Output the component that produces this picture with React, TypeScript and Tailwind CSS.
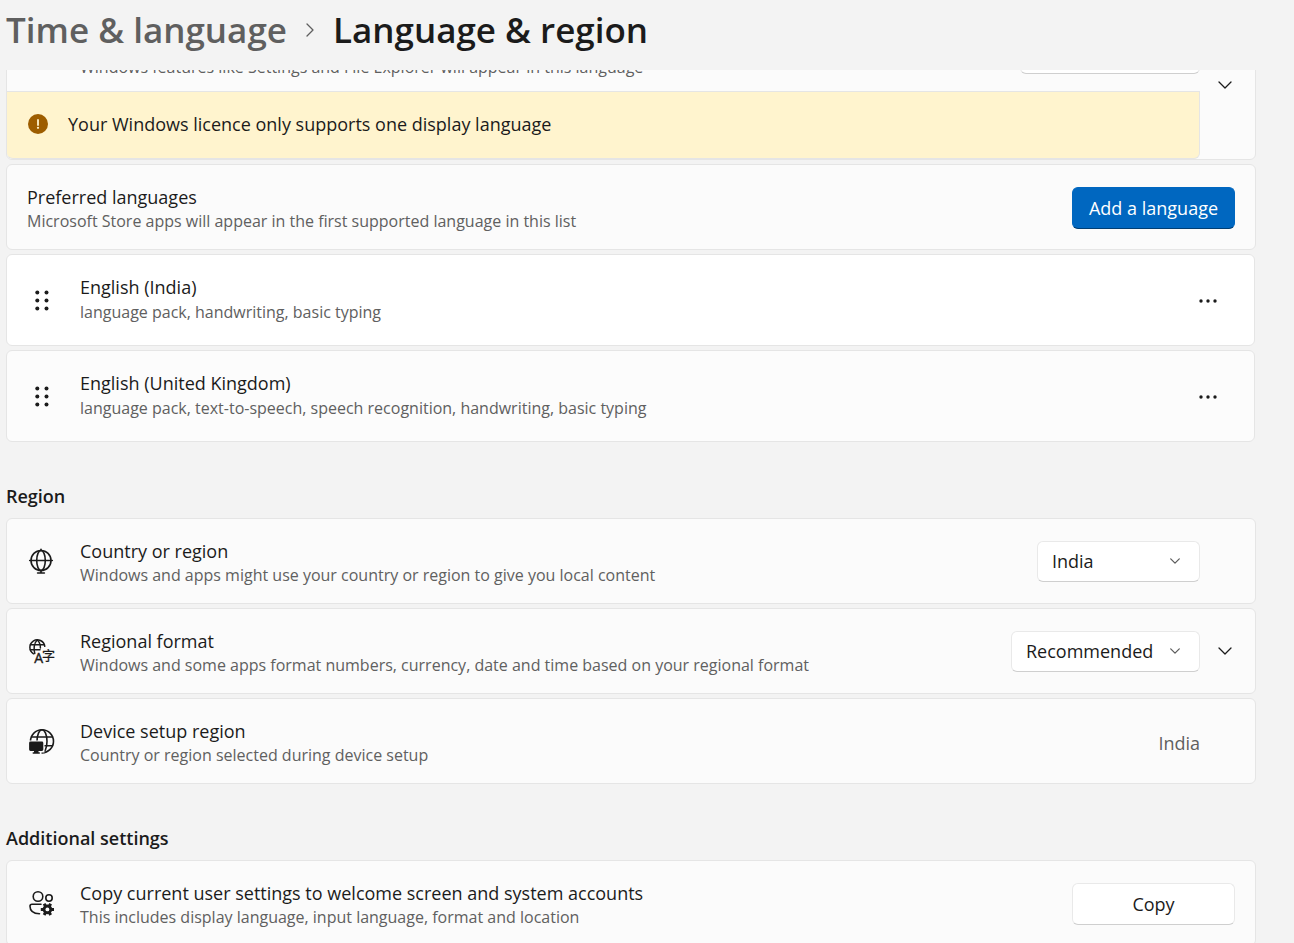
import { type ReactNode } from "react";

interface SettingRowProps {
  icon?: ReactNode;
  title: string;
  description: string;
  htmlFor?: string;
  children?: ReactNode;
}

interface PickerProps {
  id: string;
  options: string[];
  className: string;
}

const languages = [
  { name: "English (India)", features: "language pack, handwriting, basic typing", active: true },
  {
    name: "English (United Kingdom)",
    features: "language pack, text-to-speech, speech recognition, handwriting, basic typing",
    active: false,
  },
];

function Chevron({ className }: { className: string }) {
  return (
    <svg viewBox="0 0 14 8" fill="none" stroke="currentColor" strokeLinecap="round" strokeLinejoin="round" className={className}>
      <path d="M1 1l6 6 6-6" vectorEffect="non-scaling-stroke" strokeWidth="1.3" />
    </svg>
  );
}

function GlobeStandIcon() {
  return (
    <svg viewBox="0 0 28 28" className="size-7" fill="none" stroke="currentColor" strokeWidth="1.6" strokeLinecap="round">
      <circle cx="14" cy="13.5" r="10" />
      <ellipse cx="14" cy="13.5" rx="4.3" ry="10" />
      <path d="M2.7 13.5h22.6M14 2.3v1.2M14 23.5v2.4M10.6 26h6.8" />
    </svg>
  );
}

function GlobeFormatIcon() {
  return (
    <svg viewBox="0 0 28 28" className="size-7" fill="none" stroke="currentColor" strokeWidth="1.5" strokeLinecap="round">
      <path d="M6.5 16.8A7.5 7.5 0 1 1 17.8 9.300" />
      <path d="M7.800 16.500C6.500 12.500 6.800 6 10.200 3c2.300 1.800 3.200 4.500 3.200 8M3.400 7.800h13.800M3.400 12.800h9.600" />
      <text x="11.800" y="26" fontSize="14" textAnchor="middle" fill="currentColor" strokeWidth="0.400" className="font-['Open_Sans',sans-serif]">
        A
      </text>
      <text x="21.600" y="23" fontSize="13" textAnchor="middle" fill="currentColor" strokeWidth="0.300" className="font-['Noto_Sans_CJK_SC',sans-serif]">
        字
      </text>
    </svg>
  );
}

function GlobeDeviceIcon() {
  return (
    <svg viewBox="0 0 28 28" className="size-7" fill="none" stroke="currentColor" strokeWidth="1.6" strokeLinecap="round">
      <circle cx="15" cy="14.2" r="11.5" />
      <ellipse cx="15" cy="14.2" rx="5" ry="11.5" />
      <path d="M4.5 10h21M4.5 18.7h21" />
      <path d="M1 13.5h16.5v12h-3V28H1z" fill="#fbfbfb" stroke="none" />
      <path d="M3.5 14.600h11.400a1.400 1.400 0 0 1 1.400 1.400v6.600a1.400 1.400 0 0 1-1.400 1.400h-3.400v1.200h1.300v1.500H5.700v-1.500H7V24H3.500a1.400 1.400 0 0 1-1.400-1.400V16a1.400 1.400 0 0 1 1.400-1.400z" fill="currentColor" stroke="none" />
    </svg>
  );
}

function PeopleGearIcon() {
  return (
    <svg viewBox="0 0 28 28" className="size-7" fill="none" stroke="currentColor" strokeWidth="1.6" strokeLinecap="round">
      <circle cx="11" cy="7.5" r="4.8" />
      <circle cx="22" cy="9" r="3.2" />
      <path d="M14 15.2H5a2 2 0 0 0-2 2c0 4.8 3.500 7.300 9.500 7.500" />
      <g stroke="none" fill="currentColor">
        <circle cx="20.400" cy="20.400" r="4.800" />
        <g stroke="currentColor" strokeWidth="3" strokeLinecap="butt">
          <path d="M17.100 14.700l6.600 11.400M23.700 14.700l-6.600 11.400M13.800 20.400H27" />
        </g>
        <circle cx="20.400" cy="20.400" r="1.900" fill="#fbfbfb" />
      </g>
    </svg>
  );
}

function GripIcon() {
  return (
    <svg viewBox="0 0 28 28" className="size-7" fill="currentColor">
      {[6.5, 14.5, 22.5].map((y) => (
        <g key={y}>
          <circle cx="10.3" cy={y} r="2" />
          <circle cx="19.5" cy={y} r="2" />
        </g>
      ))}
    </svg>
  );
}

function Picker({ id, options, className }: PickerProps) {
  return (
    <div className={`relative shrink-0 ${className}`}>
      <select
        id={id}
        className="h-[41px] w-full appearance-none rounded-md border border-[#e9e9e9] border-b-[#cfcfcf] bg-white pl-3.5 pr-9 text-lg text-[#1b1b1b]"
      >
        {options.map((option) => (
          <option key={option}>{option}</option>
        ))}
      </select>
      <Chevron className="pointer-events-none absolute right-5 top-[17px] h-1.5 w-2.5 text-[#5d5d5d]" />
    </div>
  );
}

function ExpandButton({ label }: { label: string }) {
  return (
    <button type="button" aria-label={label} className="flex w-[55px] items-center justify-center pr-1.5">
      <Chevron className="h-2 w-3.5" />
    </button>
  );
}

function SettingRow({ icon, title, description, htmlFor, children }: SettingRowProps) {
  return (
    <section className="flex h-[86px] items-center gap-[25px] rounded-md border border-[#e5e5e5] bg-[#fbfbfb] pl-5">
      {icon}
      <div className="min-w-0 flex-1 pt-1">
        {htmlFor ? (
          <label htmlFor={htmlFor} className="block text-lg leading-6">{title}</label>
        ) : (
          <h3 className="text-lg leading-6">{title}</h3>
        )}
        <p className="text-base leading-6 text-[#606060]">{description}</p>
      </div>
      {children}
    </section>
  );
}

export default function App() {
  return (
    <div className="flex h-screen flex-col overflow-hidden bg-[#f3f3f3] font-['Open_Sans',sans-serif] text-[#1b1b1b]">
      <header className="h-[70px] shrink-0 pl-1.5 pt-[7px]">
        <nav aria-label="Breadcrumb" className="flex items-center text-[35px] font-semibold leading-[46px]">
          <a href="#time-language" className="text-[#5f5f5f]">Time &amp; language</a>
          <Chevron className="mx-4 h-2 w-3.5 -rotate-90 text-[#5f5f5f]" />
          <h1>Language &amp; region</h1>
        </nav>
      </header>

      <main className="min-h-0 flex-1 overflow-hidden pl-1.5 pr-[38px]">
        <div className="-mt-5 flex flex-col gap-1">
          <section className="flex rounded-md border border-[#e5e5e5] bg-[#fbfbfb]">
            <div className="flex-1">
              <div className="flex h-10 items-end justify-between pl-[73px]">
                <label htmlFor="display-language" className="pb-3 text-base leading-6 text-[#606060]">
                  Windows features like Settings and File Explorer will appear in this language
                </label>
                <div className="pb-[17px]">
                  <Picker id="display-language" options={["English (United Kingdom)"]} className="w-[180px]" />
                </div>
              </div>
              <div role="status" className="flex h-[68px] items-center gap-5 rounded-b-md border border-l-0 border-[#e5e5e5] bg-[#fff4ce] pb-0.5 pl-[21px] text-lg">
                <svg viewBox="0 0 20 20" className="size-5">
                  <circle cx="10" cy="10" r="10" fill="#9d5d00" />
                  <path d="M10 6v5" stroke="#fff4ce" strokeWidth="1.8" strokeLinecap="round" />
                  <circle cx="10" cy="13.8" r="1.1" fill="#fff4ce" />
                </svg>
                Your Windows licence only supports one display language
              </div>
            </div>
            <div className="flex pb-10">
              <ExpandButton label="Show display language options" />
            </div>
          </section>

          <SettingRow title="Preferred languages" description="Microsoft Store apps will appear in the first supported language in this list">
            <button type="button" className="mr-5 mt-0.5 h-[42px] w-[163px] rounded-md border border-[#0067c0] border-b-[#003e73] bg-[#0067c0] text-lg text-white">
              Add a language
            </button>
          </SettingRow>

          <ul className="mr-px flex flex-col gap-1">
            {languages.map((language) => (
              <li
                key={language.name}
                className={`flex h-[92px] items-center gap-[25px] rounded-md border border-[#e5e5e5] pl-5 ${language.active ? "bg-white" : "bg-[#fcfcfc]"}`}
              >
                <GripIcon />
                <div className="min-w-0 flex-1">
                  <h3 className="text-lg leading-6">{language.name}</h3>
                  <p className="text-base leading-[26px] text-[#606060]">{language.features}</p>
                </div>
                <button type="button" aria-label={`More options for ${language.name}`} className="mr-6 flex h-10 w-11 items-center justify-center pt-0.5">
                  <svg viewBox="0 0 18 4" className="h-1 w-[18px]" fill="currentColor">
                    <circle cx="2" cy="2" r="1.7" />
                    <circle cx="9" cy="2" r="1.7" />
                    <circle cx="16" cy="2" r="1.7" />
                  </svg>
                </button>
              </li>
            ))}
          </ul>

          <h2 className="mb-1.5 mt-[38px] text-lg font-semibold leading-6">Region</h2>
          <SettingRow
            icon={<GlobeStandIcon />}
            title="Country or region"
            description="Windows and apps might use your country or region to give you local content"
            htmlFor="country"
          >
            <Picker id="country" options={["India", "United Kingdom"]} className="mr-[55px] w-[163px]" />
          </SettingRow>
          <SettingRow
            icon={<GlobeFormatIcon />}
            title="Regional format"
            description="Windows and some apps format numbers, currency, date and time based on your regional format"
            htmlFor="regional-format"
          >
            <div className="flex">
              <Picker id="regional-format" options={["Recommended", "English (India)"]} className="w-[189px]" />
              <ExpandButton label="Show regional format options" />
            </div>
          </SettingRow>
          <SettingRow icon={<GlobeDeviceIcon />} title="Device setup region" description="Country or region selected during device setup">
            <span className="mr-[55px] pt-1 text-lg text-[#606060]">India</span>
          </SettingRow>

          <h2 className="mb-1.5 mt-[38px] text-lg font-semibold leading-6">Additional settings</h2>
          <SettingRow
            icon={<PeopleGearIcon />}
            title="Copy current user settings to welcome screen and system accounts"
            description="This includes display language, input language, format and location"
          >
            <button type="button" className="mr-5 mt-0.5 h-[42px] w-[163px] rounded-md border border-[#e9e9e9] border-b-[#cfcfcf] bg-white text-lg">
              Copy
            </button>
          </SettingRow>
        </div>
      </main>
    </div>
  );
}
